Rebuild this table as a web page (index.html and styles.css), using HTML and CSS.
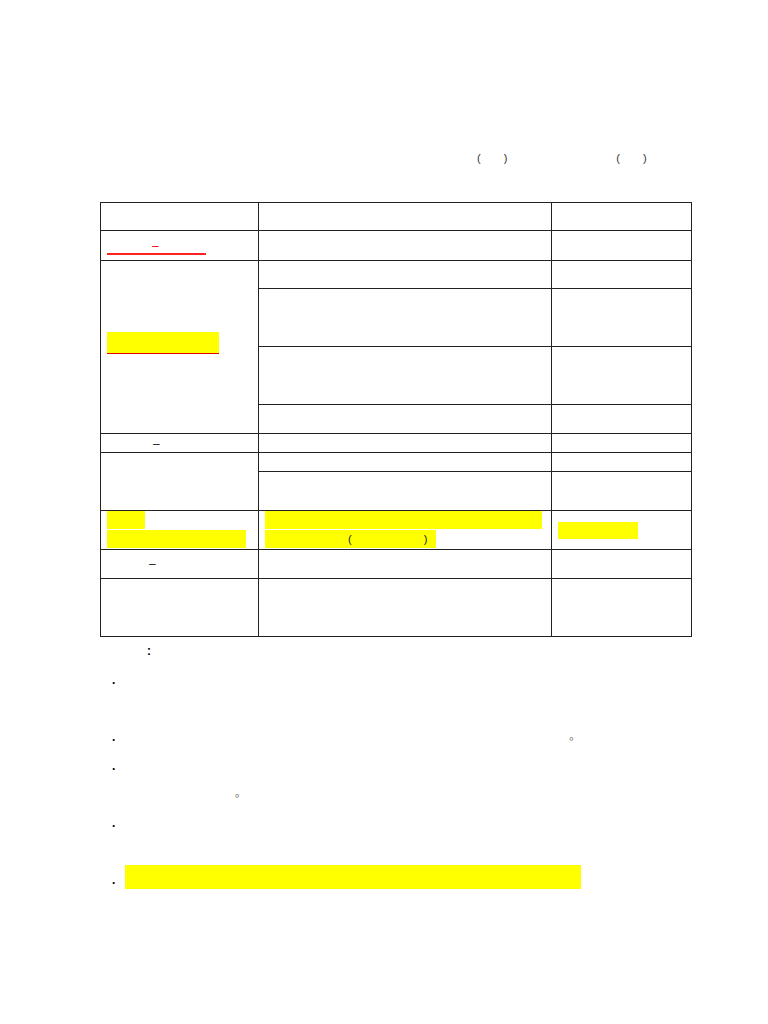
FILE: index.html
```html
<!DOCTYPE html>
<html lang="zh">
<head>
<meta charset="utf-8">
<title>表</title>
<link rel="stylesheet" href="styles.css">
</head>
<body>
<div class="page">
  <div class="head"><span class="par">(</span><span class="sp23"></span><span class="par">)</span><span class="sp109"></span><span class="par">(</span><span class="sp23"></span><span class="par">)</span></div>

  <div class="grid">
    <div class="c r1 c1"></div>
    <div class="c r1 c2"></div>
    <div class="c r1 c3"></div>

    <div class="c r2 c1"><span class="red-u">–</span></div>
    <div class="c r2 c2"></div>
    <div class="c r2 c3"></div>

    <div class="c c1 span4"><span class="hl-box"></span></div>
    <div class="c r3 c2"></div>
    <div class="c r3 c3"></div>
    <div class="c r4 c2"></div>
    <div class="c r4 c3"></div>
    <div class="c r5 c2"></div>
    <div class="c r5 c3"></div>
    <div class="c r6 c2"></div>
    <div class="c r6 c3"></div>

    <div class="c r7 c1 dash-cell d53"><span class="dash lower">–</span></div>
    <div class="c r7 c2"></div>
    <div class="c r7 c3"></div>

    <div class="c c1 span2"></div>
    <div class="c r8 c2"></div>
    <div class="c r8 c3"></div>
    <div class="c r9 c2"></div>
    <div class="c r9 c3"></div>

    <div class="c r10 c1 stack"><div class="hl w38"></div><div class="hl w139"></div></div>
    <div class="c r10 c2 stack"><div class="hl w277"></div><div class="hl w171 paren-line"><span class="par">(</span><span class="sp72"></span><span class="par">)</span></div></div>
    <div class="c r10 c3 mid"><div class="hl-small"></div></div>

    <div class="c r11 c1 dash-cell d48"><span class="dash">–</span></div>
    <div class="c r11 c2"></div>
    <div class="c r11 c3"></div>

    <div class="c r12 c1"></div>
    <div class="c r12 c2"></div>
    <div class="c r12 c3"></div>
  </div>

  <div class="notes">
    <div class="colon-line"><span class="colon">:</span></div>
    <div class="nl"><span class="dot">.</span></div>
    <div class="nl"></div>
    <div class="nl"><span class="dot">.</span><span class="circ c-far">。</span></div>
    <div class="nl"><span class="dot">.</span></div>
    <div class="nl"><span class="circ c-near">。</span></div>
    <div class="nl"><span class="dot">.</span></div>
    <div class="nl"></div>
    <div class="nl"><span class="dot">.</span><span class="hl-note"></span></div>
  </div>
</div>
</body>
</html>
```

FILE: styles.css
```css
html, body {
  margin: 0;
  padding: 0;
  background: #ffffff;
}

body {
  font-family: "Liberation Sans", "Noto Sans CJK SC", sans-serif;
  font-size: 12px;
  color: #000;
}

.page {
  padding-top: 146px;
  width: 768px;
}

/* header line with parentheses */
.head {
  height: 24px;
  margin-bottom: 32px;
  padding-left: 477px;
  display: flex;
  align-items: center;
}

.par {
  font-size: 11px;
  color: #333;
  line-height: 14px;
}

.sp23 { display: inline-block; width: 23px; }
.sp109 { display: inline-block; width: 109px; }
.sp72 { display: inline-block; width: 72px; }

/* table grid */
.grid {
  margin-left: 100px;
  width: 592px;
  box-sizing: border-box;
  display: grid;
  grid-template-columns: 158px 293px 140px;
  grid-template-rows: 28px 30px 28px 58px 58px 29px 19px 19px 39px 39px 29px 58px;
  border-top: 1px solid #222;
  border-left: 1px solid #222;
}

.c {
  box-sizing: border-box;
  border-right: 1px solid #222;
  border-bottom: 1px solid #222;
  display: flex;
  align-items: center;
  min-width: 0;
}

.c1 { grid-column: 1; }
.c2 { grid-column: 2; }
.c3 { grid-column: 3; }

.r1 { grid-row: 1; }
.r2 { grid-row: 2; }
.r3 { grid-row: 3; }
.r4 { grid-row: 4; }
.r5 { grid-row: 5; }
.r6 { grid-row: 6; }
.r7 { grid-row: 7; }
.r8 { grid-row: 8; }
.r9 { grid-row: 9; }
.r10 { grid-row: 10; }
.r11 { grid-row: 11; }
.r12 { grid-row: 12; }

.span4 {
  grid-row: 3 / span 4;
  padding-left: 6px;
  padding-bottom: 9px;
}

.span2 { grid-row: 8 / span 2; }

/* red underlined text */
.r2.c1 { padding-left: 6px; }

.red-u {
  display: inline-block;
  box-sizing: border-box;
  width: 99px;
  height: 17px;
  line-height: 16px;
  padding-left: 45px;
  color: #ff0000;
  font-size: 12px;
  border-bottom: 2px solid #ff2020;
  margin-top: 2px;
}

.hl-box {
  display: block;
  width: 112px;
  height: 22px;
  box-sizing: border-box;
  background: #ffff00;
  border-bottom: 1px solid #e00000;
}

.dash {
  font-size: 12px;
  color: #222;
  line-height: 14px;
}

.dash.lower { padding-top: 2px; }

.d53 { padding-left: 52px; }
.d48 { padding-left: 48px; }

/* yellow highlighted rows */
.stack {
  flex-direction: column;
  align-items: flex-start;
  justify-content: flex-start;
  padding-left: 6px;
  gap: 1px;
}

.hl {
  height: 18px;
  background: #ffff00;
}

.w38 { width: 38px; }
.w139 { width: 139px; }
.w277 { width: 277px; }
.w171 { width: 171px; }

.paren-line {
  box-sizing: border-box;
  padding-left: 83px;
  display: flex;
  align-items: center;
}

.paren-line .par { color: #222; }

.mid { padding-left: 6px; }

.hl-small {
  width: 80px;
  height: 17px;
  background: #ffff00;
}

/* notes */
.notes {
  width: 768px;
}

.colon-line {
  height: 25px;
  padding-left: 147px;
  padding-top: 3px;
  box-sizing: border-box;
  display: flex;
  align-items: center;
}

.colon {
  font-weight: bold;
  font-size: 12px;
  line-height: 14px;
}

.nl {
  height: 28.6px;
  line-height: 28.6px;
  white-space: nowrap;
}

.dot {
  display: inline-block;
  margin-left: 112px;
  font-weight: bold;
  font-size: 12px;
  vertical-align: -4px;
}

.circ {
  font-family: "Noto Sans CJK SC", sans-serif;
  font-size: 11px;
  color: #555;
  vertical-align: -3px;
}

.c-far { margin-left: 454px; }
.c-near { margin-left: 235px; }

.hl-note {
  display: inline-block;
  width: 456px;
  height: 24px;
  margin-left: 10px;
  background: #ffff00;
  vertical-align: middle;
}
```
